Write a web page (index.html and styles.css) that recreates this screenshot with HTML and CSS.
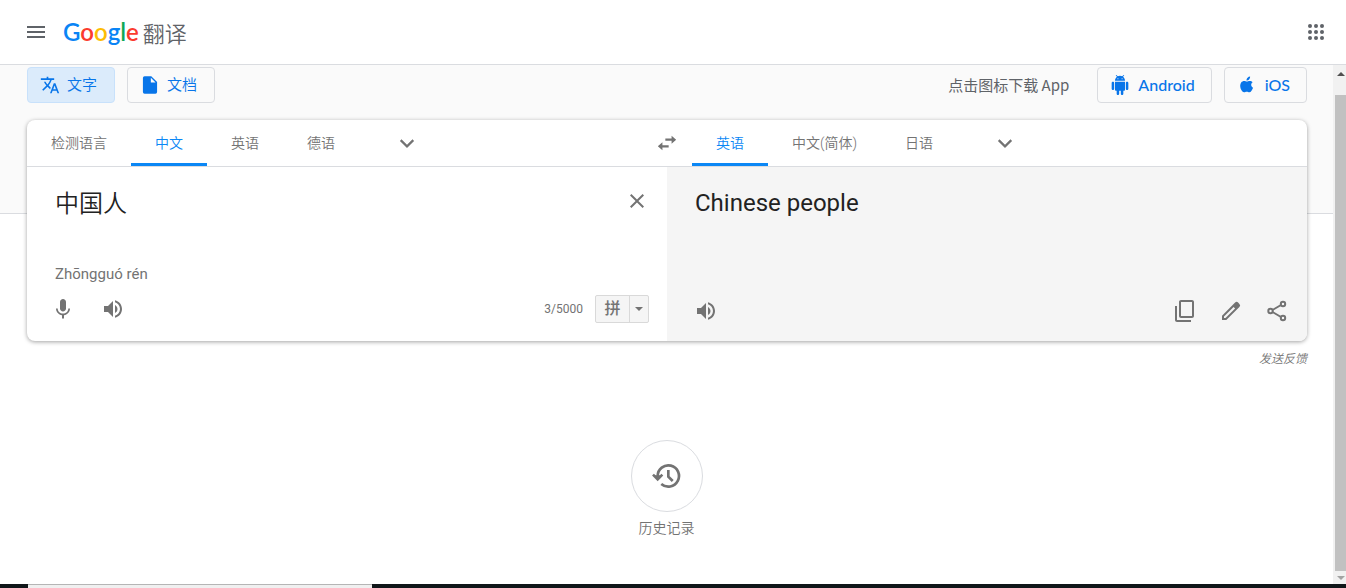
FILE: index.html
```html
<!DOCTYPE html>
<html lang="zh-CN">
<head>
<meta charset="utf-8">
<meta name="viewport" content="width=device-width, initial-scale=1">
<title>Google 翻译</title>
<link rel="stylesheet" href="styles.css">
</head>
<body>
<header class="topbar">
  <button class="icon-btn" aria-label="主菜单"><svg class="icon" viewBox="0 0 24 24"><path d="M3 18h18v-2H3v2zm0-5h18v-2H3v2zm0-7v2h18V6H3z"/></svg></button>
  <a class="brand" href="#"><span class="logo"><span class="blue">G</span><span class="red">o</span><span class="yellow">o</span><span class="blue">g</span><span class="green">l</span><span class="red">e</span></span><span class="product">翻译</span></a>
  <button class="icon-btn apps" aria-label="Google 应用"><svg class="icon" viewBox="0 0 24 24"><circle cx="6" cy="6" r="2"/><circle cx="12" cy="6" r="2"/><circle cx="18" cy="6" r="2"/><circle cx="6" cy="12" r="2"/><circle cx="12" cy="12" r="2"/><circle cx="18" cy="12" r="2"/><circle cx="6" cy="18" r="2"/><circle cx="12" cy="18" r="2"/><circle cx="18" cy="18" r="2"/></svg></button>
</header>
<div class="viewport">
  <main class="page">
    <section class="band">
      <button class="chip selected"><svg class="chip-icon" viewBox="0 0 24 24"><path d="M12.87 15.07l-2.54-2.51.03-.03c1.74-1.94 2.98-4.17 3.71-6.53H17V4h-7V2H8v2H1v1.99h11.17C11.5 7.92 10.44 9.75 9 11.35 8.07 10.32 7.3 9.19 6.69 8h-2c.73 1.63 1.73 3.17 2.98 4.56l-5.09 5.02L4 19l5-5 3.11 3.11.76-2.04zM18.5 10h-2L12 22h2l1.12-3h4.75L21 22h2l-4.5-12zm-2.62 7l1.62-4.33L19.12 17h-3.24z"/></svg><span class="chip-text">文字</span></button>
      <button class="chip"><svg class="chip-icon" viewBox="0 0 24 24"><path d="M5.500 1.500a2 2 0 0 0-2 2v17a2 2 0 0 0 2 2h13a2 2 0 0 0 2-2V8.500l-7-7h-8zm7.500 7.500V3.300L18.700 9H13z"/></svg><span class="chip-text">文档</span></button>
      <span class="app-label">点击图标下载 App</span>
      <a class="chip store" href="#"><svg class="chip-icon" viewBox="0 0 24 24"><path d="M6 18c0 .55.45 1 1 1h1v3.500c0 .83.67 1.500 1.500 1.500s1.500-.67 1.500-1.500V19h2v3.500c0 .83.67 1.500 1.500 1.500s1.500-.67 1.500-1.500V19h1c.55 0 1-.45 1-1V8H6v10zM3.500 8C2.670 8 2 8.670 2 9.500v7c0 .83.67 1.500 1.500 1.500S5 17.330 5 16.500v-7C5 8.670 4.330 8 3.500 8zm17 0c-.83 0-1.500.67-1.500 1.500v7c0 .83.67 1.500 1.500 1.500s1.500-.67 1.500-1.500v-7c0-.83-.67-1.500-1.500-1.500zm-4.970-5.840l1.300-1.300c.2-.2.2-.51 0-.71-.2-.2-.51-.2-.71 0l-1.480 1.480C13.850 1.230 12.950 1 12 1c-.96 0-1.860.23-2.660.63L7.850.15c-.2-.2-.51-.2-.71 0-.2.2-.2.51 0 .71l1.310 1.310C6.970 3.260 6 5.010 6 7h12c0-1.990-.97-3.750-2.470-4.840zM10 5H9V4h1v1zm5 0h-1V4h1v1z"/></svg><span class="store-text">Android</span></a>
      <a class="chip store" href="#"><svg class="chip-icon" viewBox="0 0 24 24"><path d="M15.700 1.800c.2 1.400-.4 2.600-1.200 3.500-.8.900-1.900 1.400-3.100 1.300-.1-1.300.5-2.600 1.300-3.400.8-.8 2-1.300 3-1.400zM18.800 8.700c-2.500 1.600-2.300 5.200.5 6.600-.9 2.500-2.600 5.500-4.500 5.500-1.300 0-1.700-.7-3.100-.7s-1.900.7-3.100.7C5.400 20.800 2 13 5 9c1-1.200 2.300-1.800 3.600-1.800 1.300 0 2.200.7 3.200.7s1.900-.8 3.500-.8c1.300 0 2.700.6 3.500 1.600z"/></svg><span class="store-text">iOS</span></a>
    </section>

    <section class="card">
      <div class="languages">
        <div class="tabs">
          <button class="tab">检测语言</button><button class="tab active">中文</button><button class="tab">英语</button><button class="tab">德语</button>
          <button class="more" aria-label="更多源语言"><svg class="icon" viewBox="0 0 24 24"><path d="M5.400 7.600 12 14.200l6.600-6.600 1.900 1.900-8.500 8.500-8.500-8.500z"/></svg></button>
        </div>
        <button class="swap" aria-label="交换语言"><svg class="icon" viewBox="0 0 24 24"><path d="M6.500 11.200 1 16l5.500 4.800V17.300H14v-2.600H6.500zM23 8l-5.500-4.800V6.700H10v2.600h7.500v3.500z"/></svg></button>
        <div class="tabs">
          <button class="tab active">英语</button><button class="tab">中文(简体)</button><button class="tab">日语</button>
          <button class="more" aria-label="更多目标语言"><svg class="icon" viewBox="0 0 24 24"><path d="M5.400 7.600 12 14.200l6.600-6.600 1.900 1.900-8.500 8.500-8.500-8.500z"/></svg></button>
        </div>
      </div>
      <div class="panels">
        <div class="panel">
          <div class="text-row">
            <textarea class="text source" rows="1" aria-label="原文">中国人</textarea>
            <button class="icon-btn clear" aria-label="清除"><svg class="icon" viewBox="0 0 24 24"><path d="M19 6.410 17.590 5 12 10.590 6.410 5 5 6.410 10.590 12 5 17.590 6.410 19 12 13.410 17.590 19 19 17.590 13.410 12z"/></svg></button>
          </div>
          <p class="pinyin">Zhōngguó rén</p>
          <div class="actions">
            <button class="icon-btn" aria-label="语音输入"><svg class="icon" viewBox="0 0 24 24"><path d="M12 14.500c1.660 0 3-1.340 3-3V5c0-1.660-1.340-3-3-3S9 3.340 9 5v6.500c0 1.660 1.340 3 3 3zm5.300-3c0 3-2.540 5.100-5.300 5.100s-5.300-2.100-5.300-5.100H5c0 3.410 2.720 6.230 6 6.720V21.500h2v-3.280c3.280-.48 6-3.300 6-6.720h-1.700z"/></svg></button>
            <button class="icon-btn" aria-label="朗读原文"><svg class="icon" viewBox="0 0 24 24"><path d="M3 9v6h4l5 5V4L7 9H3zm13.500 3c0-1.770-1.020-3.290-2.500-4.030v8.050c1.480-.73 2.500-2.250 2.500-4.020zM14 3.230v2.060c2.890.86 5 3.540 5 6.710s-2.110 5.850-5 6.710v2.060c4.010-.91 7-4.490 7-8.770s-2.990-7.860-7-8.770z"/></svg></button>
            <span class="count">3/5000</span>
            <div class="ime"><button class="ime-main">拼</button><button class="ime-more" aria-label="输入法"><svg class="caret" viewBox="0 0 8 4"><path d="M0 0h8L4 4z"/></svg></button></div>
          </div>
        </div>
        <div class="panel result">
          <div class="text-row"><p class="text">Chinese people</p></div>
          <div class="actions">
            <button class="icon-btn" aria-label="朗读译文"><svg class="icon" viewBox="0 0 24 24"><path d="M3 9v6h4l5 5V4L7 9H3zm13.500 3c0-1.770-1.020-3.290-2.500-4.030v8.050c1.480-.73 2.500-2.250 2.500-4.020zM14 3.230v2.060c2.890.86 5 3.540 5 6.710s-2.110 5.850-5 6.710v2.060c4.010-.91 7-4.490 7-8.770s-2.990-7.860-7-8.770z"/></svg></button>
            <button class="icon-btn push" aria-label="复制"><svg class="icon" viewBox="0 0 24 24"><path d="M20 1H8C6.900 1 6 1.900 6 3v14c0 1.100.9 2 2 2h11c1.100 0 2-.9 2-2V3c0-1.100-.9-2-2-2zm-1 16H8V3h11v14zM4 7H2v14c0 1.100.9 2 2 2h14v-2H4V7z"/></svg></button>
            <button class="icon-btn" aria-label="修改"><svg class="icon" viewBox="0 0 24 24"><path d="M20.400 4.900 19.100 3.600a2.100 2.100 0 0 0-3 0L3 16.700V21h4.300L20.400 7.900a2.100 2.100 0 0 0 0-3zM6.500 19H5v-1.500l9.600-9.600 1.500 1.500z"/></svg></button>
            <button class="icon-btn" aria-label="分享"><svg class="icon" viewBox="0 0 24 24"><g fill="none" stroke="currentColor" stroke-width="2"><circle cx="5.500" cy="12" r="2.200"/><circle cx="18" cy="5" r="2.200"/><circle cx="18" cy="19" r="2.200"/><path d="m7.500 11 8.500-5M7.500 13l8.500 5"/></g></svg></button>
          </div>
        </div>
      </div>
    </section>
    <a class="feedback" href="#">发送反馈</a>
    <button class="history"><span class="history-circle"><svg class="history-icon" viewBox="0 0 24 24"><g fill="none" stroke="currentColor" stroke-width="2"><path d="M5 13v-1a8 8 0 1 1 2.700 6"/><path d="m1.500 11 3.500 3.500L8.500 11"/><path d="M13 7.500v5l3.300 3.300"/></g><path d="m2.500 11.500 2.500 3 2.500-3z"/></svg></span>历史记录</button>
  </main>
  <div class="scrollbar" aria-hidden="true"><svg class="arrow" viewBox="0 0 8 4"><path d="M0 4h8L4 0z"/></svg><span class="thumb"></span><svg class="arrow off" viewBox="0 0 8 4"><path d="M0 0h8L4 4z"/></svg></div>
</div>
<footer class="strip"><span class="strip-light"></span></footer>
</body>
</html>
```
FILE: styles.css
```css
* { box-sizing: border-box; }

body {
  margin: 0;
  height: 100vh;
  display: flex;
  flex-direction: column;
  overflow: hidden;
  background: #fff;
  color: #737373;
  font-family: Roboto, "Noto Sans CJK SC", sans-serif;
  font-size: 14px;
}

button {
  margin: 0;
  padding: 0;
  border: 0;
  background: none;
  color: inherit;
  font: inherit;
  cursor: pointer;
}

a { color: inherit; text-decoration: none; }
p { margin: 0; }
svg { display: block; fill: currentColor; }

.icon { width: 24px; height: 24px; }
.icon-btn { flex: none; display: flex; }

.topbar {
  flex: none;
  display: flex;
  align-items: center;
  height: 65px;
  padding: 0 18px 0 24px;
  border-bottom: 1px solid #dadce0;
  color: #5f6368;
}

.brand {
  display: flex;
  align-items: center;
  gap: 4px;
  margin-left: 15px;
}

.logo {
  font-family: Lato, sans-serif;
  font-weight: 600;
  font-size: 24px;
  line-height: 32px;
}

.product {
  font-family: "Noto Sans CJK SC", sans-serif;
  font-weight: 350;
  font-size: 22px;
  line-height: 32px;
}

.blue { color: #0a84f5; }
.red { color: #fb3b2f; }
.yellow { color: #fdbc05; }
.green { color: #0fa958; }
.apps { margin-left: auto; }

.viewport {
  flex: 1;
  min-height: 0;
  display: flex;
}

.page {
  flex: 1;
  min-width: 0;
  display: flex;
  flex-direction: column;
}

.band {
  flex: none;
  display: flex;
  align-items: flex-start;
  gap: 12px;
  height: 149px;
  padding: 2px 26px 0 27px;
  border-bottom: 1px solid #dadce0;
  background: #fafafa;
}

.chip {
  display: flex;
  align-items: center;
  gap: 7px;
  height: 36px;
  padding: 0 17px 0 12px;
  border: 1px solid #dadce0;
  border-radius: 4px;
  color: #0875e9;
  font-weight: 350;
  font-size: 15px;
}

.selected { border-color: #c8e1fb; background: #dbebfb; }
.chip-icon { width: 20px; height: 20px; }
.chip-text { padding-bottom: 4px; }
.store-text { padding-bottom: 2px; }

.store {
  gap: 8px;
  padding: 0 16px 0 12px;
  font-family: Lato, sans-serif;
  font-weight: 500;
  font-size: 16px;
}

.app-label {
  margin: 0 16px 0 auto;
  color: #5f6368;
  font-family: "Noto Sans CJK SC", sans-serif;
  font-size: 15px;
  line-height: 36px;
}

.card {
  flex: none;
  margin: -94px 26px 0 27px;
  border-radius: 8px;
  overflow: hidden;
  background: #fff;
  box-shadow: 0 1px 4px rgba(0, 0, 0, 0.37);
}

.languages {
  display: flex;
  height: 47px;
  border-bottom: 1px solid #dadce0;
}

.tabs { flex: 1; min-width: 0; display: flex; }

.tab {
  padding: 0 24px;
  border-bottom: 3px solid transparent;
  font-weight: 350;
  white-space: nowrap;
}

.active { border-bottom-color: #0b87f5; color: #0b87f5; }

.more, .swap {
  display: flex;
  align-items: center;
  justify-content: center;
}

.more { width: 48px; margin-left: 24px; }
.more .icon, .swap .icon { width: 20px; height: 20px; }
.swap { flex: none; width: 50px; }
.panels { display: flex; }

.panel {
  flex: 1;
  min-width: 0;
  display: flex;
  flex-direction: column;
  height: 174px;
  padding: 20px 18px 18px 28px;
}

.result { background: #f5f5f5; padding-bottom: 16px; }

.text-row {
  display: flex;
  height: 32px;
}

.text {
  flex: 1;
  min-width: 0;
  color: #222;
  font-size: 24px;
  line-height: 32px;
}

.source {
  height: 32px;
  margin: 0;
  padding: 0;
  border: 0;
  outline: 0;
  overflow: hidden;
  resize: none;
  background: none;
  font-family: "Noto Sans CJK SC", sans-serif;
  font-weight: 350;
  line-height: 30px;
}

.clear { align-items: flex-start; padding-top: 2px; }

.pinyin {
  margin-top: 45px;
  font-size: 15px;
  line-height: 20px;
}

.actions {
  display: flex;
  align-items: center;
  gap: 22px;
  height: 28px;
  margin-top: auto;
}

.panel:not(.result) .actions { margin-left: -4px; gap: 26px; }
.result .actions { margin-left: -1px; }

.count {
  margin: 0 -14px 0 auto;
  font-size: 12px;
}

.ime {
  display: flex;
  height: 28px;
  border: 1px solid #d9d9d9;
  border-radius: 2px;
  background: #f5f5f5;
}

.ime-main { width: 33px; font-weight: 500; font-size: 16px; line-height: 26px; }
.ime-more { padding: 0 5px; border-left: 1px solid #d9d9d9; }
.caret { width: 8px; height: 4px; }

.push { margin-left: auto; }

.feedback {
  align-self: flex-end;
  margin: 10px 26px 0 0;
  font-style: italic;
  font-weight: 350;
  font-size: 12px;
  line-height: 16px;
}

.history {
  align-self: center;
  display: flex;
  flex-direction: column;
  align-items: center;
  gap: 6px;
  margin-top: 73px;
  font-weight: 350;
  line-height: 20px;
}

.history-circle {
  display: grid;
  place-items: center;
  width: 72px;
  height: 72px;
  border: 1px solid #dadce0;
  border-radius: 50%;
}

.history-icon { width: 32px; height: 32px; }

.scrollbar {
  flex: none;
  display: flex;
  flex-direction: column;
  align-items: flex-end;
  width: 13px;
  background: #f1f1f1;
}

.arrow { width: 8px; height: 4px; margin: 7px 1px 19px 0; color: #505050; }
.off { margin: 5px 1px 4px 0; color: #a3a3a3; }
.thumb { flex: 1; width: 11px; background: #c1c1c1; }

.strip {
  flex: none;
  height: 4px;
  padding-left: 28px;
  background: #101619;
}

.strip-light {
  display: block;
  width: 344px;
  height: 4px;
  border-top: 1px solid #b5b5b5;
  background: #f0f0f0;
}
```
